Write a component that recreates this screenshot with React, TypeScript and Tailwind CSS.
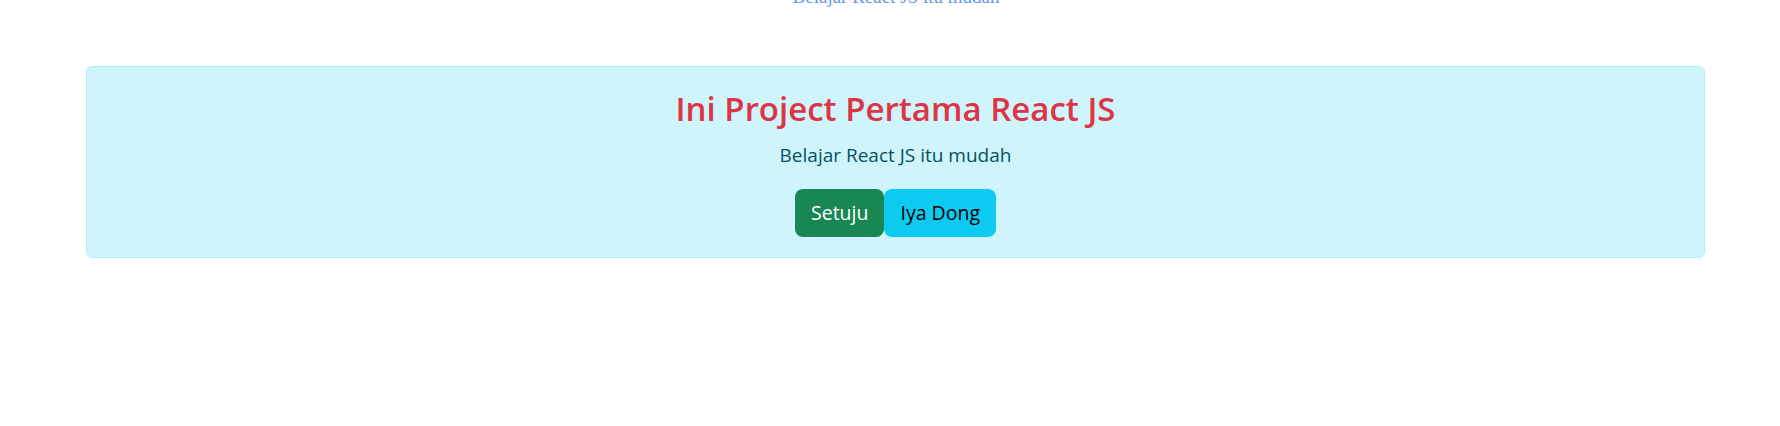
import React from "react";

const App: React.FC = () => {
  return (
    <div className="min-h-screen bg-white">
      <p className="mt-[-14px] pl-[12px] text-center text-[19px] leading-[22px] text-[#6495ed] font-['Liberation_Serif',serif]">
        Belajar React JS itu mudah
      </p>

      <div className="ml-[86px] mr-[75px] mt-[58px]">
        <div className="rounded-[6px] border border-[#b6effb] bg-[#cff4fc] px-4 pt-4 pb-[20px] text-center font-['Open_Sans',sans-serif]">
          <h1 className="text-[33px] leading-[52px] font-semibold text-[#dc3545] mb-[6px]">
            Ini Project Pertama React JS
          </h1>
          <p className="text-[19px] leading-[28px] text-[#055160] mb-5">
            Belajar React JS itu mudah
          </p>
          <div className="flex justify-center">
            <button className="h-[48px] rounded-[8px] bg-[#198754] px-[16px] text-[19.5px] text-white">
              Setuju
            </button>
            <button className="h-[48px] rounded-[8px] bg-[#0dcaf0] px-[16px] text-[19.5px] text-black">
              Iya Dong
            </button>
          </div>
        </div>
      </div>
    </div>
  );
};

export default App;
